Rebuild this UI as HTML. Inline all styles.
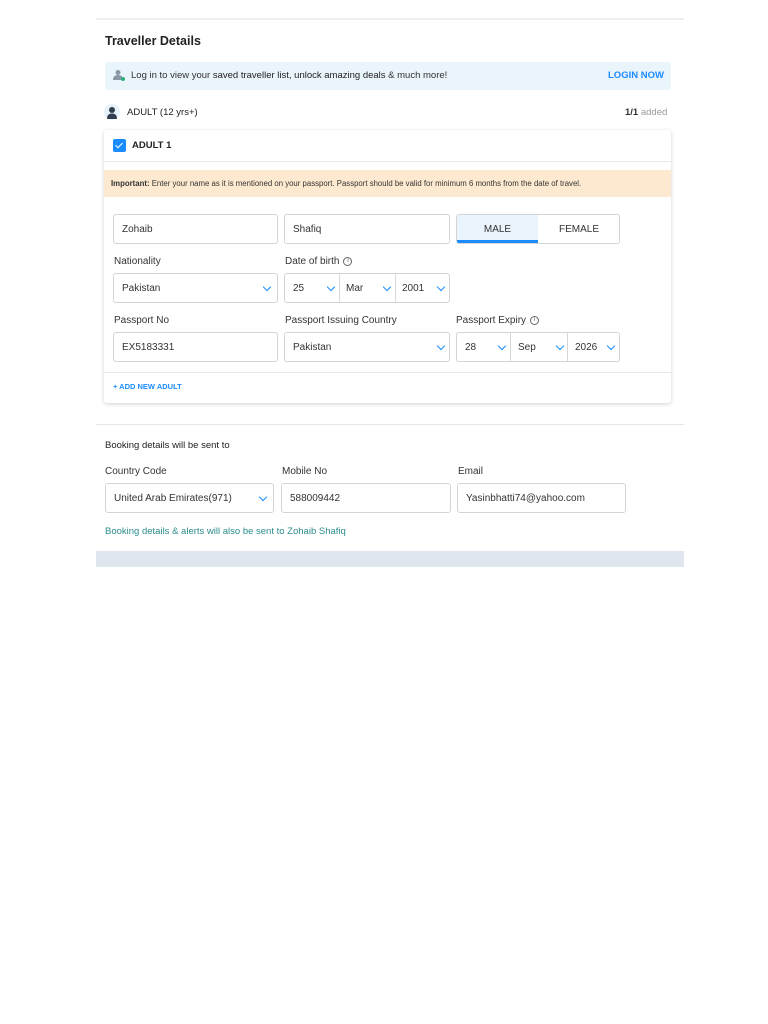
<!DOCTYPE html>
<html><head><style>
*{box-sizing:border-box;margin:0;padding:0}
body{width:768px;height:1024px;background:#fff;font-family:"Liberation Sans",sans-serif;position:relative;overflow:hidden;color:#222}
.a{position:absolute}
.in{position:absolute;border:1px solid #d4d4d4;border-radius:3px;height:30px;font-size:10px;line-height:29px;padding-left:8px;color:#333;background:#fff}
.lb{position:absolute;font-size:10px;color:#333}
.ch{position:absolute;width:6px;height:6px;border-right:1.6px solid #1a8cff;border-bottom:1.6px solid #1a8cff;transform:rotate(45deg);top:10px}
.sep{position:absolute;top:0;bottom:0;width:1px;background:#d8d8d8}
.info{display:inline-block;width:9px;height:9px;border:1px solid #666;border-radius:50%;font-size:6px;line-height:7px;text-align:center;vertical-align:middle;margin-left:4px;color:#555}
</style></head><body>
<div class="a" style="left:96px;top:18px;width:588px;height:2px;background:#eceff2"></div>
<div class="a" style="left:105px;top:34px;font-size:12.5px;font-weight:bold;color:#222">Traveller Details</div>
<div class="a" style="left:105px;top:62px;width:566px;height:28px;background:#eaf4fb;border-radius:3px"></div>
<svg class="a" style="left:113px;top:69px" width="12" height="12"><circle cx="5" cy="3.5" r="2.5" fill="#8a97a5"/><path d="M0 11 Q0 6 5 6 Q10 6 10 11Z" fill="#8a97a5"/><circle cx="10" cy="10" r="2" fill="#2fb07a"/></svg>
<div class="a" style="left:131px;top:70px;font-size:9.5px;color:#333">Log in to view your <b style="font-weight:normal;color:#222">saved traveller list, unlock amazing deals</b> &amp; much more!</div>
<div class="a" style="left:608px;top:70px;font-size:9.5px;font-weight:bold;color:#1a8cff">LOGIN NOW</div>
<div class="a" style="left:104px;top:104px;width:16px;height:16px;border-radius:50%;background:#e6f1fb"></div>
<svg class="a" style="left:106px;top:106px" width="12" height="14"><circle cx="6" cy="4" r="3" fill="#2f3d4c"/><path d="M1 13 Q1 7.5 6 7.5 Q11 7.5 11 13Z" fill="#2f3d4c"/></svg>
<div class="a" style="left:127px;top:107px;font-size:9.5px;color:#222">ADULT (12 yrs+)</div>
<div class="a" style="left:625px;top:107px;font-size:9.5px;color:#999"><b style="color:#333">1/1</b> added</div>
<div class="a" style="left:104px;top:130px;width:567px;height:273px;background:#fff;border-radius:3px;box-shadow:0 1px 4px rgba(0,0,0,0.18)"></div>
<div class="a" style="left:113px;top:139px;width:13px;height:13px;background:#1a8cff;border-radius:2px"></div>
<div class="a" style="left:117px;top:141px;width:4px;height:7px;border-right:1.4px solid #fff;border-bottom:1.4px solid #fff;transform:rotate(45deg)"></div>
<div class="a" style="left:132px;top:140px;font-size:9.5px;font-weight:bold;color:#222">ADULT 1</div>
<div class="a" style="left:104px;top:161px;width:567px;height:1px;background:#e8e8e8"></div>
<div class="a" style="left:104px;top:170px;width:567px;height:27px;background:#fde9cf"></div>
<div class="a" style="left:111px;top:179px;font-size:7.8px;color:#333"><b>Important:</b> Enter your name as it is mentioned on your passport. Passport should be valid for minimum 6 months from the date of travel.</div>
<div class="in" style="left:113px;top:214px;width:165px">Zohaib</div>
<div class="in" style="left:284px;top:214px;width:166px">Shafiq</div>
<div class="in" style="left:456px;top:214px;width:164px;padding:0;overflow:hidden">
<div class="a" style="left:0;top:0;width:81px;height:28px;background:#eaf4fd;border-bottom:3px solid #1a8cff;text-align:center;line-height:29px">MALE</div>
<div class="a" style="left:81px;top:0;width:82px;height:28px;text-align:center;line-height:29px">FEMALE</div></div>
<div class="lb" style="left:114px;top:256px">Nationality</div>
<div class="lb" style="left:285px;top:256px">Date of birth<span class="info">i</span></div>
<div class="in" style="left:113px;top:273px;width:165px">Pakistan<div class="ch" style="left:150px"></div></div>
<div class="in" style="left:284px;top:273px;width:166px">25<div class="ch" style="left:43px"></div><div class="sep" style="left:54px"></div>
<div class="a" style="left:61px;top:0">Mar</div><div class="ch" style="left:99px"></div><div class="sep" style="left:110px"></div>
<div class="a" style="left:117px;top:0">2001</div><div class="ch" style="left:153px"></div></div>
<div class="lb" style="left:114px;top:315px">Passport No</div>
<div class="lb" style="left:285px;top:315px">Passport Issuing Country</div>
<div class="lb" style="left:456px;top:315px">Passport Expiry<span class="info">i</span></div>
<div class="in" style="left:113px;top:332px;width:165px">EX5183331</div>
<div class="in" style="left:284px;top:332px;width:166px">Pakistan<div class="ch" style="left:153px"></div></div>
<div class="in" style="left:456px;top:332px;width:164px">28<div class="ch" style="left:42px"></div><div class="sep" style="left:53px"></div>
<div class="a" style="left:61px;top:0">Sep</div><div class="ch" style="left:100px"></div><div class="sep" style="left:110px"></div>
<div class="a" style="left:118px;top:0">2026</div><div class="ch" style="left:151px"></div></div>
<div class="a" style="left:104px;top:372px;width:567px;height:1px;background:#e8e8e8"></div>
<div class="a" style="left:113px;top:382px;font-size:7.5px;font-weight:bold;color:#1a8cff">+ ADD NEW ADULT</div>
<div class="a" style="left:96px;top:424px;width:588px;height:1px;background:#e6e6e6"></div>
<div class="a" style="left:105px;top:440px;font-size:9.5px;color:#222">Booking details will be sent to</div>
<div class="lb" style="left:105px;top:466px">Country Code</div>
<div class="lb" style="left:282px;top:466px">Mobile No</div>
<div class="lb" style="left:458px;top:466px">Email</div>
<div class="in" style="left:105px;top:483px;width:169px">United Arab Emirates(971)<div class="ch" style="left:154px"></div></div>
<div class="in" style="left:281px;top:483px;width:170px">588009442</div>
<div class="in" style="left:457px;top:483px;width:169px">Yasinbhatti74@yahoo.com</div>
<div class="a" style="left:105px;top:526px;font-size:9.5px;color:#2a8c8c">Booking details &amp; alerts will also be sent to Zohaib Shafiq</div>
<div class="a" style="left:96px;top:551px;width:588px;height:16px;background:#dfe6ee"></div>
</body></html>
